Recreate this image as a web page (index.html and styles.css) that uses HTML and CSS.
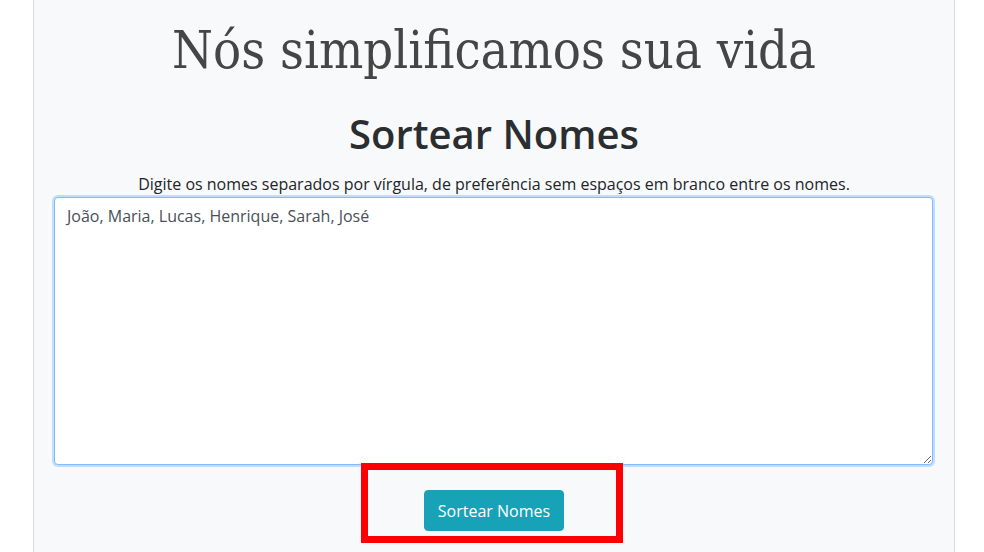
FILE: index.html
```html
<!DOCTYPE html>
<html lang="pt-BR">
<head>
<meta charset="utf-8">
<title>Sortear Nomes</title>
<link rel="stylesheet" href="styles.css">
</head>
<body>
<main class="page">
  <h1 class="title">Nós simplificamos sua vida</h1>
  <h2 class="heading">Sortear Nomes</h2>
  <p class="hint">Digite os nomes separados por vírgula, de preferência sem espaços em branco entre os nomes.</p>
  <textarea class="names">João, Maria, Lucas, Henrique, Sarah, José</textarea>
  <div class="actions">
    <button class="btn" type="button">Sortear Nomes</button>
    <span class="highlight"></span>
  </div>
</main>
</body>
</html>
```
FILE: styles.css
```css
html, body {
  margin: 0;
  padding: 0;
  background: #ffffff;
  height: 100%;
  overflow: hidden;
}
.page {
  position: relative;
  margin-left: 33px;
  width: 920px;
  height: 552px;
  background: #f8f9fa;
  border-left: 1px solid #dadbdc;
  border-right: 1px solid #dadbdc;
  text-align: center;
  font-family: "Open Sans", "Noto Sans", sans-serif;
  color: #212529;
}
.title {
  margin: 0;
  padding-top: 19px;
  font-family: "DejaVu Serif", serif;
  font-stretch: condensed;
  font-weight: normal;
  font-size: 52px;
  line-height: 62px;
  color: #454545;
}
.heading {
  margin: 26px 0 0;
  font-family: "Open Sans", sans-serif;
  font-weight: 600;
  font-size: 40px;
  line-height: 54px;
  color: #2b2e31;
}
.hint {
  margin: 13px 0 0;
  font-size: 16px;
  line-height: 20px;
}
.names {
  display: block;
  box-sizing: border-box;
  margin: 3px 0 0 20px;
  width: 879px;
  height: 268px;
  padding: 6px 12px;
  resize: vertical;
  background: #ffffff;
  border: 1px solid #80bdff;
  border-radius: 4px;
  box-shadow: 0 0 0 2px rgba(0, 123, 255, 0.22);
  outline: none;
  font-family: "Open Sans", sans-serif;
  font-size: 16px;
  line-height: 24px;
  color: #495057;
}
.actions {
  position: relative;
  display: flex;
  justify-content: center;
  padding-top: 25px;
}
.btn {
  width: 140px;
  height: 41px;
  background: #17a2b8;
  border: 1px solid #17a2b8;
  border-radius: 4px;
  color: #ffffff;
  font-family: "Open Sans", sans-serif;
  font-size: 16px;
  padding: 0;
  cursor: pointer;
}
.highlight {
  position: absolute;
  left: 327px;
  top: -2px;
  width: 262px;
  height: 80px;
  box-sizing: border-box;
  border: 7px solid #ff0000;
}
```
